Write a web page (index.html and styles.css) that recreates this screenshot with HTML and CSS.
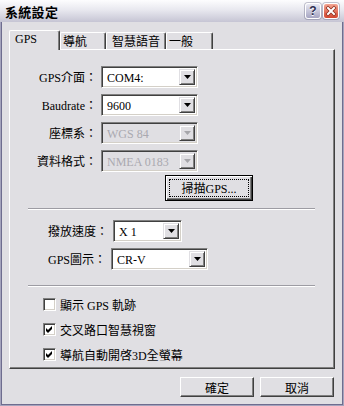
FILE: index.html
```html
<!DOCTYPE html>
<html lang="zh-Hant">
<head>
    <meta charset="UTF-8">
    <title>系統設定</title>
    <link rel="stylesheet" href="styles.css">
</head>
<body>

<div class="window">
    <div class="titlebar">
        <span class="title">系統設定</span>
        <div class="tb-buttons">
            <span class="tb-btn tb-help">?</span>
            <span class="tb-btn tb-close">
                <svg width="14" height="14" viewBox="0 0 14 14">
                    <path d="M4 4L10 10M10 4L4 10" stroke="#8a2a1a" stroke-width="3.4" stroke-linecap="square"/>
                    <path d="M4 4L10 10M10 4L4 10" stroke="#fff" stroke-width="2" stroke-linecap="square"/>
                </svg>
            </span>
        </div>
    </div>

    <div class="body">
        <div class="tabs">
            <div class="tab active tab-gps">GPS</div>
            <div class="tab tab-nav">導航</div>
            <div class="tab tab-voice">智慧語音</div>
            <div class="tab tab-general">一般</div>
        </div>

        <div class="panel">
            <div class="fields">
                <label>GPS介面：</label>
                <div class="combo">
                    <span class="combo-text">COM4:</span>
                    <span class="combo-arrow"><svg width="7" height="4" viewBox="0 0 7 4"><path d="M0 0h7L3.5 4z"/></svg></span>
                </div>

                <label>Baudrate：</label>
                <div class="combo">
                    <span class="combo-text">9600</span>
                    <span class="combo-arrow"><svg width="7" height="4" viewBox="0 0 7 4"><path d="M0 0h7L3.5 4z"/></svg></span>
                </div>

                <label>座標系：</label>
                <div class="combo disabled">
                    <span class="combo-text">WGS 84</span>
                    <span class="combo-arrow"><svg width="7" height="4" viewBox="0 0 7 4"><path d="M0 0h7L3.5 4z"/></svg></span>
                </div>

                <label>資料格式：</label>
                <div class="combo disabled">
                    <span class="combo-text">NMEA 0183</span>
                    <span class="combo-arrow"><svg width="7" height="4" viewBox="0 0 7 4"><path d="M0 0h7L3.5 4z"/></svg></span>
                </div>
            </div>

            <button class="btn btn-default scan"><span class="focus">掃描GPS...</span></button>

            <div class="sep"></div>

            <div class="playback">
                <div class="play-row">
                    <label>撥放速度：</label>
                    <div class="combo combo-speed">
                        <span class="combo-text">X 1</span>
                        <span class="combo-arrow"><svg width="7" height="4" viewBox="0 0 7 4"><path d="M0 0h7L3.5 4z"/></svg></span>
                    </div>
                </div>
                <div class="play-row">
                    <label>GPS圖示：</label>
                    <div class="combo">
                        <span class="combo-text">CR-V</span>
                        <span class="combo-arrow"><svg width="7" height="4" viewBox="0 0 7 4"><path d="M0 0h7L3.5 4z"/></svg></span>
                    </div>
                </div>
            </div>

            <div class="sep sep-lower"></div>

            <div class="checks">
                <div class="check-row">
                    <span class="checkbox"></span>
                    <span>顯示 GPS 軌跡</span>
                </div>
                <div class="check-row">
                    <span class="checkbox"><svg width="7" height="7" viewBox="0 0 7 7"><path d="M0 2L2 4L6 0V3L2 7L0 5Z"/></svg></span>
                    <span>交叉路口智慧視窗</span>
                </div>
                <div class="check-row">
                    <span class="checkbox"><svg width="7" height="7" viewBox="0 0 7 7"><path d="M0 2L2 4L6 0V3L2 7L0 5Z"/></svg></span>
                    <span>導航自動開啓3D全螢幕</span>
                </div>
            </div>
        </div>

        <div class="actions">
            <button class="btn">確定</button>
            <button class="btn">取消</button>
        </div>
    </div>
</div>

</body>
</html>
```

FILE: styles.css
```css
* {
    box-sizing: border-box;
}

body {
    margin: 0;
    font-family: "Liberation Serif", "Noto Sans CJK TC", serif;
    font-size: 12px;
    color: #000;
}

.window {
    width: 344px;
    height: 406px;
    display: flex;
    flex-direction: column;
    background-color: #e0dfe3;
}

/* title bar */
.titlebar {
    height: 22px;
    display: flex;
    align-items: center;
    justify-content: space-between;
    padding: 0 5px;
    background: linear-gradient(#fdfdfe, #e8e8ef 45%, #c6c5d4);
}

.title {
    font-family: "Noto Sans CJK TC", sans-serif;
    font-weight: bold;
    font-size: 13px;
    letter-spacing: 0.3px;
}

.tb-buttons {
    display: flex;
    gap: 2px;
}

.tb-btn {
    width: 16px;
    height: 16px;
    border: 1px solid #fff;
    border-radius: 3px;
    display: flex;
    align-items: center;
    justify-content: center;
    box-shadow: 0 0 0 1px rgba(90, 90, 120, 0.35);
}

.tb-help {
    background: linear-gradient(#e8e8f2, #a6a5c2);
    font-family: "Liberation Sans", sans-serif;
    font-weight: bold;
    font-size: 12px;
    color: #2c2c50;
    text-shadow: 0 1px 0 #fff;
}

.tb-close {
    background: linear-gradient(#f4a592, #d4462f);
}

/* dialog body */
.body {
    flex: 1;
    display: flex;
    flex-direction: column;
    border: solid #a5a4bd;
    border-width: 0 1px 1px;
    box-shadow: inset 1px 0 #6e6d8f, inset -1px 0 #6e6d8f, inset 0 -1px #6e6d8f;
    padding: 8px 8px 0 8px;
}

.tabs {
    display: flex;
    align-items: flex-end;
    height: 19px;
}

.tab {
    height: 17px;
    border: 1px solid;
    border-color: #fff #404040 transparent #fff;
    border-bottom: none;
    border-radius: 2px 2px 0 0;
    box-shadow: inset -1px 0 #808080;
    line-height: 15px;
    white-space: nowrap;
    font-family: "Noto Sans CJK TC", sans-serif;
}

.tab.active {
    height: 20px;
    margin-bottom: -1px;
    position: relative;
    z-index: 1;
    line-height: 16px;
    background-color: #e0dfe3;
}

.tab-gps {
    width: 51px;
    padding-left: 5px;
    font-family: "Liberation Serif", serif;
}

.tab-nav {
    width: 46px;
    padding-left: 2px;
}

.tab-voice {
    width: 60px;
    padding-left: 5px;
}

.tab-general {
    width: 47px;
    padding-left: 2px;
}

.panel {
    height: 320px;
    border: 1px solid;
    border-color: #fff #404040 #404040 #fff;
    box-shadow: inset -1px -1px #808080;
}

/* gps fields */
.fields {
    display: grid;
    grid-template-columns: 87px 97px;
    grid-auto-rows: 22px;
    column-gap: 4px;
    row-gap: 6px;
    align-items: center;
    padding-top: 16px;
}

.fields label {
    text-align: right;
}

.combo {
    height: 22px;
    display: flex;
    align-items: stretch;
    padding: 2px;
    background-color: #fff;
    border: 1px solid;
    border-color: #808080 #fff #fff #808080;
    box-shadow: inset 1px 1px #404040, inset -1px -1px #d4d0c8;
}

.combo-text {
    flex: 1;
    padding-left: 3px;
    line-height: 18px;
    white-space: nowrap;
    overflow: hidden;
}

.combo-arrow {
    width: 16px;
    display: flex;
    align-items: center;
    justify-content: center;
    background-color: #e0dfe3;
    border: 1px solid;
    border-color: #e0dfe3 #404040 #404040 #e0dfe3;
    box-shadow: inset 1px 1px #fff, inset -1px -1px #808080;
}

.combo-arrow svg {
    fill: #000;
}

.combo.disabled {
    background-color: #e0dfe3;
    color: #aaa9b0;
}

.combo.disabled .combo-arrow svg {
    fill: #a6a6aa;
}

.combo-speed {
    width: 69px;
}

/* buttons */
.btn {
    width: 74px;
    height: 20px;
    padding: 0;
    font-family: "Noto Sans CJK TC", sans-serif;
    font-size: 12px;
    color: #000;
    background-color: #e0dfe3;
    border: 1px solid;
    border-color: #fff #404040 #404040 #fff;
    box-shadow: inset -1px -1px #808080;
}

.btn-default {
    border: 1px solid #000;
    box-shadow: inset 1px 1px #fff, inset -1px -1px #404040, inset -2px -2px #808080;
    display: flex;
}

.btn-default .focus {
    flex: 1;
    margin: 3px;
    border: 1px dotted #000;
    display: flex;
    align-items: center;
    justify-content: center;
    font-family: "Liberation Serif", "Noto Sans CJK TC", serif;
}

.scan {
    width: 88px;
    height: 26px;
    margin: 3px 0 0 155px;
}

.sep {
    height: 2px;
    margin: 7px 19px 0 18px;
    border-top: 1px solid #9d9ca3;
    border-bottom: 1px solid #fff;
}

.sep-lower {
    margin-top: 15px;
}

/* playback */
.playback {
    display: flex;
    flex-direction: column;
    gap: 6px;
    padding: 10px 0 0 38px;
}

.play-row {
    display: flex;
    align-items: center;
    gap: 5px;
}

.play-row .combo {
    width: 97px;
}

.play-row .combo-speed {
    width: 69px;
}

/* checkboxes */
.checks {
    display: flex;
    flex-direction: column;
    gap: 12px;
    padding: 11px 0 0 33px;
}

.check-row {
    height: 13px;
    display: flex;
    align-items: center;
    gap: 4px;
    white-space: nowrap;
}

.checkbox {
    width: 13px;
    height: 13px;
    flex: none;
    display: flex;
    align-items: center;
    justify-content: center;
    background-color: #fff;
    border: 1px solid;
    border-color: #808080 #fff #fff #808080;
    box-shadow: inset 1px 1px #404040, inset -1px -1px #d4d0c8;
}

.checkbox svg {
    fill: #000;
}

.actions {
    display: flex;
    justify-content: flex-end;
    gap: 6px;
    margin-top: 8px;
    padding-right: 1px;
}
```
